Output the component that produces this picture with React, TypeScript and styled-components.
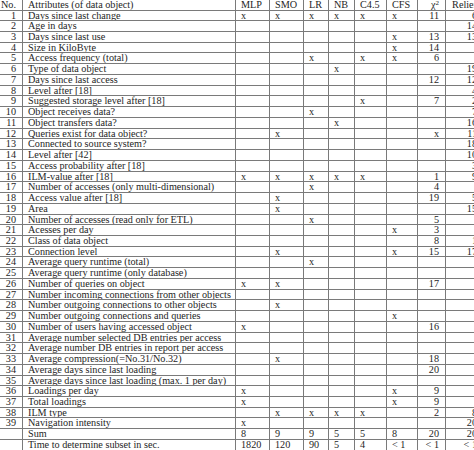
import React from 'react';
import styled, {createGlobalStyle} from 'styled-components';

const GlobalStyle = createGlobalStyle`
    html, body {
        margin: 0;
        padding: 0;
        background: #ffffff;
        overflow: hidden;
    }
`;

const Page = styled.div`
    width: 100%;
    height: 450px;
    overflow: hidden;
    background: #ffffff;
`;

const Table = styled.div`
    display: grid;
    grid-template-columns: 26px 212px 33px 33px 24px 25px 31px 30px 27px 37px;
    grid-auto-rows: 9.74px;
    gap: 1px;
    padding: 1px;
    width: max-content;
    margin: -1.2px 0 0 -5px;
    background: #7a7a7a;
    font-family: "Liberation Serif", "Times New Roman", serif;
    font-size: 10.2px;
    color: #1e1e1e;
`;

const Cell = styled.div<{ $right?: boolean }>`
    background: #ffffff;
    line-height: 9.74px;
    white-space: nowrap;
    overflow: hidden;
    text-align: ${p => (p.$right ? 'right' : 'left')};
    padding: ${p => (p.$right ? '0 6px 0 0' : '0 0 0 5px')};
`;

const Sup = styled.sup`
    font-size: 7px;
    line-height: 0;
    vertical-align: 3px;
`;

// which columns are right aligned (No., chi^2, Relief)
const rightCols = [true, false, false, false, false, false, false, false, true, true];

type Row = [string, string, string[]];

// values: MLP, SMO, LR, NB, C4.5, CFS, chi^2, Relief
const rows: Row[] = [
    ['1', 'Days since last change', ['x', 'x', 'x', 'x', 'x', 'x', '11', '6']],
    ['2', 'Age in days', ['', '', '', '', '', '', '', '14']],
    ['3', 'Days since last use', ['', '', '', '', '', 'x', '13', '13']],
    ['4', 'Size in KiloByte', ['', '', '', '', '', 'x', '14', '']],
    ['5', 'Access frequency (total)', ['', '', 'x', '', 'x', 'x', '6', '']],
    ['6', 'Type of data object', ['', '', '', 'x', '', '', '', '19']],
    ['7', 'Days since last access', ['', '', '', '', '', '', '12', '12']],
    ['8', 'Level after [18]', ['', '', '', '', '', '', '', '4']],
    ['9', 'Suggested storage level after [18]', ['', '', '', '', 'x', '', '7', '2']],
    ['10', 'Object receives data?', ['', '', 'x', '', '', '', '', '7']],
    ['11', 'Object transfers data?', ['', '', '', 'x', '', '', '', '16']],
    ['12', 'Queries exist for data object?', ['', 'x', '', '', '', '', 'x', '11']],
    ['13', 'Connected to source system?', ['', '', '', '', '', '', '', '18']],
    ['14', 'Level after [42]', ['', '', '', '', '', '', '', '10']],
    ['15', 'Access probability after [18]', ['', '', '', '', '', '', '', '3']],
    ['16', 'ILM-value after [18]', ['x', 'x', 'x', 'x', 'x', '', '1', '9']],
    ['17', 'Number of accesses (only multi-dimensional)', ['', '', 'x', '', '', '', '4', '']],
    ['18', 'Access value after [18]', ['', 'x', '', '', '', '', '19', '5']],
    ['19', 'Area', ['', 'x', '', '', '', '', '', '15']],
    ['20', 'Number of accesses (read only for ETL)', ['', '', 'x', '', '', '', '5', '']],
    ['21', 'Acesses per day', ['', '', '', '', '', 'x', '3', '']],
    ['22', 'Class of data object', ['', '', '', '', '', '', '8', '1']],
    ['23', 'Connection level', ['', 'x', '', '', '', 'x', '15', '17']],
    ['24', 'Average query runtime (total)', ['', '', 'x', '', '', '', '', '']],
    ['25', 'Average query runtime (only database)', ['', '', '', '', '', '', '', '']],
    ['26', 'Number of queries on object', ['x', 'x', '', '', '', '', '17', '']],
    ['27', 'Number incoming connections from other objects', ['', '', '', '', '', '', '', '']],
    ['28', 'Number outgoing connections to other objects', ['', 'x', '', '', '', '', '', '']],
    ['29', 'Number outgoing connections and queries', ['', '', '', '', '', 'x', '', '']],
    ['30', 'Number of users having accessed object', ['x', '', '', '', '', '', '16', '']],
    ['31', 'Average number selected DB entries per access', ['', '', '', '', '', '', '', '']],
    ['32', 'Average number DB entries in report per access', ['', '', '', '', '', '', '', '']],
    ['33', 'Average compression(=No.31/No.32)', ['', 'x', '', '', '', '', '18', '']],
    ['34', 'Average days since last loading', ['', '', '', '', '', '', '20', '']],
    ['35', 'Average days since last loading (max. 1 per day)', ['', '', '', '', '', '', '', '']],
    ['36', 'Loadings per day', ['x', '', '', '', '', 'x', '9', '']],
    ['37', 'Total loadings', ['x', '', '', '', '', 'x', '9', '']],
    ['38', 'ILM type', ['', 'x', 'x', 'x', 'x', '', '2', '8']],
    ['39', 'Navigation intensity', ['x', '', '', '', '', '', '', '20']],
    ['', 'Sum', ['8', '9', '9', '5', '5', '8', '20', '20']],
    ['', 'Time to determine subset in sec.', ['1820', '120', '90', '5', '4', '< 1', '< 1', '< 1']],
];

const headers: React.ReactNode[] = [
    'No.',
    'Attributes (of data object)',
    'MLP',
    'SMO',
    'LR',
    'NB',
    'C4.5',
    'CFS',
    <>χ<Sup>2</Sup></>,
    'Relief',
];

const App: React.FC = () => {
    return (
        <Page>
            <GlobalStyle/>
            <Table>
                {headers.map((h, i) => (
                    <Cell key={'h' + i} $right={rightCols[i]}>{h}</Cell>
                ))}
                {rows.map(([no, name, vals], r) => {
                    const cells = [no, name, ...vals];
                    return cells.map((c, i) => (
                        <Cell key={r + '-' + i} $right={rightCols[i]}>{c}</Cell>
                    ));
                })}
            </Table>
        </Page>
    );
};

export default App;
